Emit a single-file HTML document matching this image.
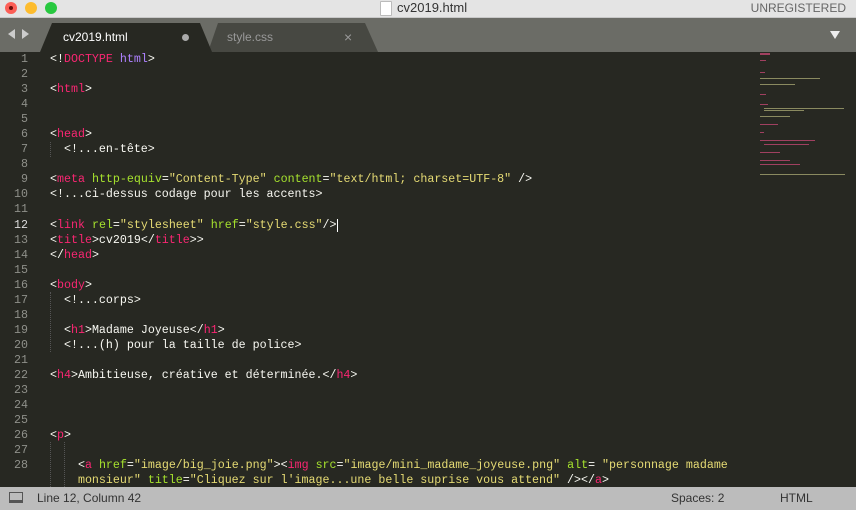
<!DOCTYPE html>
<html><head><style>
body{margin:0;width:856px;height:510px;overflow:hidden;background:#272822;font-family:"Liberation Sans",sans-serif;position:relative}
.title{position:absolute;left:0;top:0;width:856px;height:17px;background:#e4e4e4;border-bottom:1px solid #c8c8c8}
.dot{position:absolute;top:2px;width:12px;height:12px;border-radius:50%}
.tabbar{position:absolute;left:0;top:18px;width:856px;height:34px;background:#6b6c66}
.tab{position:absolute;top:5px;height:29px;font-size:12px;line-height:29px}
.code{position:absolute;left:0;top:52px;width:745px;height:435px;overflow:hidden;font-family:"Liberation Mono",monospace;font-size:11.65px;line-height:15.04px;color:#f8f8f2}
.ln{position:absolute;left:0;top:0;width:28px;text-align:right;color:#8f908a;white-space:pre}
.tx{position:absolute;left:50px;top:0;white-space:pre}
.t{color:#f92672}.a{color:#a6e22e}.s{color:#e6db74}.p{color:#ae81ff}
.status{position:absolute;left:0;top:487px;width:856px;height:23px;background:#bcbcbc;font-size:12px;color:#333;line-height:23px}
.guide{position:absolute;border-left:1px dotted #555;width:0}
</style></head><body>
<div class="title">
<div class="dot" style="left:5px;background:#fc5f57;border:0"></div><div style="position:absolute;left:9px;top:6px;width:4px;height:4px;border-radius:50%;background:#6b0c09"></div>
<div class="dot" style="left:25px;background:#fdbc2e"></div>
<div class="dot" style="left:45px;background:#28c840"></div>
<div style="position:absolute;left:380px;top:1px;width:10px;height:13px;background:#fff;border:1px solid #bbb;border-radius:1px"></div>
<div style="position:absolute;left:397px;top:0;font-size:13px;color:#333;line-height:16px">cv2019.html</div>
<div style="position:absolute;right:10px;top:0;font-size:12px;color:#666;line-height:16px">UNREGISTERED</div>
</div>
<div class="tabbar">
<div style="position:absolute;left:8px;top:11px;width:0;height:0;border-top:5px solid transparent;border-bottom:5px solid transparent;border-right:7px solid #ccc"></div>
<div style="position:absolute;left:22px;top:11px;width:0;height:0;border-top:5px solid transparent;border-bottom:5px solid transparent;border-left:7px solid #ccc"></div>
<svg style="position:absolute;left:40px;top:5px" width="345" height="29"><path d="M168 29 L178 0 L325 0 L338 29Z" fill="#474842"/><path d="M0 29 L12 0 L160 0 L172 29Z" fill="#272822"/></svg>
<div class="tab" style="left:63px;color:#fff">cv2019.html</div>
<div style="position:absolute;left:182px;top:16px;width:7px;height:7px;border-radius:50%;background:#aaa"></div>
<div class="tab" style="left:227px;color:#999">style.css</div>
<div class="tab" style="left:344px;color:#999;font-size:14px">×</div>
<div style="position:absolute;left:830px;top:13px;width:0;height:0;border-left:5px solid transparent;border-right:5px solid transparent;border-top:8px solid #eee"></div>
</div>
<div class="guide" style="left:50px;top:142px;height:15px"></div>
<div class="guide" style="left:50px;top:292px;height:60px"></div>
<div class="guide" style="left:64px;top:442px;height:45px"></div>
<div class="guide" style="left:50px;top:442px;height:45px"></div>
<div class="code"><div class="ln">1
2
3
4
5
6
7
8
9
10
11
<span style="color:#ddd">12</span>
13
14
15
16
17
18
19
20
21
22
23
24
25
26
27
28</div><div class="tx">&lt;!<span class="t">DOCTYPE</span> <span class="p">html</span>&gt;

&lt;<span class="t">html</span>&gt;


&lt;<span class="t">head</span>&gt;
  &lt;!...en-tête&gt;

&lt;<span class="t">meta</span> <span class="a">http-equiv</span>=<span class="s">"Content-Type"</span> <span class="a">content</span>=<span class="s">"text/html; charset=UTF-8"</span> /&gt;
&lt;!...ci-dessus codage pour les accents&gt;

&lt;<span class="t">link</span> <span class="a">rel</span>=<span class="s">"stylesheet"</span> <span class="a">href</span>=<span class="s">"style.css"</span>/&gt;<span style="border-left:1px solid #fff"></span>
&lt;<span class="t">title</span>&gt;cv2019&lt;/<span class="t">title</span>&gt;&gt;
&lt;/<span class="t">head</span>&gt;

&lt;<span class="t">body</span>&gt;
  &lt;!...corps&gt;

  &lt;<span class="t">h1</span>&gt;Madame Joyeuse&lt;/<span class="t">h1</span>&gt;
  &lt;!...(h) pour la taille de police&gt;

&lt;<span class="t">h4</span>&gt;Ambitieuse, créative et déterminée.&lt;/<span class="t">h4</span>&gt;



&lt;<span class="t">p</span>&gt;

    &lt;<span class="t">a</span> <span class="a">href</span>=<span class="s">"image/big_joie.png"</span>&gt;&lt;<span class="t">img</span> <span class="a">src</span>=<span class="s">"image/mini_madame_joyeuse.png"</span> <span class="a">alt</span>= <span class="s">"personnage madame</span>
    <span class="s">monsieur"</span> <span class="a">title</span>=<span class="s">"Cliquez sur l'image...une belle suprise vous attend"</span> /&gt;&lt;/<span class="t">a</span>&gt;</div></div>
<svg style="position:absolute;left:758px;top:52px" width="90" height="130">
<g fill="#a04060"><rect x="2" y="1" width="10" height="2"/><rect x="2" y="8" width="6" height="1"/><rect x="2" y="20" width="5" height="1"/><rect x="2" y="42" width="6" height="1"/><rect x="2" y="52" width="8" height="1"/><rect x="2" y="72" width="18" height="1"/><rect x="2" y="80" width="4" height="1"/><rect x="2" y="88" width="55" height="1"/><rect x="6" y="92" width="45" height="1"/><rect x="2" y="100" width="20" height="1"/><rect x="2" y="108" width="30" height="1"/><rect x="2" y="112" width="40" height="1"/></g>
<g fill="#8a8a60"><rect x="2" y="26" width="60" height="1"/><rect x="2" y="32" width="35" height="1"/><rect x="6" y="56" width="80" height="1"/><rect x="6" y="58" width="40" height="1"/><rect x="2" y="64" width="30" height="1"/><rect x="2" y="122" width="85" height="1"/></g>
</svg>
<div class="status">
<div style="position:absolute;left:9px;top:5px;width:14px;height:11px;border:1px solid #555;border-bottom:3px solid #555;box-sizing:border-box"></div>
<span style="position:absolute;left:37px">Line 12, Column 42</span>
<span style="position:absolute;left:671px">Spaces: 2</span>
<span style="position:absolute;left:780px">HTML</span>
</div>
</body></html>
